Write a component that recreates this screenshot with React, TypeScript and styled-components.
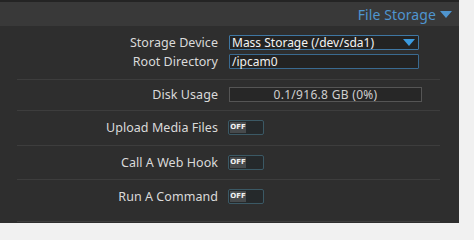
import React from "react";
import styled, { createGlobalStyle } from "styled-components";

const Global = createGlobalStyle`
  html, body { margin: 0; padding: 0; background: #f1f1f1; }
  body { font-family: "Noto Sans", "Open Sans", sans-serif; }
  * { box-sizing: border-box; }
`;

const Page = styled.div`
  display: flex;
  height: 223px;
  overflow: hidden;
`;

const Panel = styled.div`
  width: 459px;
  flex: none;
  background: #2e2e2e;
  border-top: 2px solid #242424;
  display: flex;
  flex-direction: column;
`;

const Aside = styled.div`
  flex: 1;
  background: #f1f1f1;
`;

const Header = styled.div`
  height: 24px;
  flex: none;
  background: #393939;
  display: flex;
  align-items: center;
  justify-content: flex-end;
  padding-right: 7px;
  gap: 4px;
  color: #4f95cf;
  font-size: 14px;
  letter-spacing: 0.1px;
`;

const Body = styled.div`
  display: flex;
  flex-direction: column;
  margin: 0 19px 0 17px;
`;

const Group = styled.div<{ $pt: number; $pb: number; $gap?: number }>`
  display: flex;
  flex-direction: column;
  gap: ${(p) => p.$gap ?? 0}px;
  padding: ${(p) => p.$pt}px 0 ${(p) => p.$pb}px;
  border-bottom: 1px solid #3d3d3d;
`;

const Row = styled.div`
  display: grid;
  grid-template-columns: 201px auto;
  column-gap: 11px;
  align-items: center;
  height: 15px;
`;

const Label = styled.div`
  text-align: right;
  color: #dadada;
  font-size: 12.5px;
  letter-spacing: 0.05px;
  line-height: 15px;
  white-space: nowrap;
`;

const Select = styled.div`
  width: 190px;
  height: 15px;
  border: 1px solid #3f77a3;
  border-radius: 1px;
  background: #232323;
  display: flex;
  align-items: center;
  justify-content: space-between;
  padding: 0 3px 0 2px;
  color: #f4f4f4;
  font-size: 12px;
  line-height: 13px;
`;

const Input = styled.div`
  width: 190px;
  height: 15px;
  border: 1px solid #3a6a90;
  border-radius: 1px;
  background: #232323;
  padding: 0 2px;
  color: #f0f0f0;
  font-size: 12px;
  line-height: 13px;
`;

const Meter = styled.div`
  width: 193px;
  height: 15px;
  border: 1px solid #555;
  background: #272727;
  color: #cfcfcf;
  font-size: 12px;
  line-height: 13px;
  text-align: center;
  letter-spacing: 0.3px;
`;

const Toggle = styled.div`
  width: 36px;
  height: 15px;
  margin-left: -1px;
  border: 1px solid #3b5965;
  border-radius: 2px;
  background: #25292b;
  display: flex;
  align-items: stretch;
`;

const Knob = styled.div`
  width: 16px;
  margin: 1px;
  background: #474a4c;
  color: #f2f2f2;
  font-size: 7px;
  font-weight: 700;
  line-height: 11px;
  text-align: center;
  font-family: "DejaVu Sans", sans-serif;
`;

const Arrow = ({ size, color }: { size: [number, number]; color: string }) => (
  <svg width={size[0]} height={size[1]} viewBox="0 0 12 7" style={{ display: "block" }}>
    <path d="M0 0 H12 L6 7 Z" fill={color} />
  </svg>
);

const OffToggle = () => (
  <Toggle>
    <Knob>OFF</Knob>
  </Toggle>
);

export default function App() {
  return (
    <>
      <Global />
      <Page>
        <Panel>
          <Header>
            <span>File Storage</span>
            <Arrow size={[12, 7]} color="#4f95cf" />
          </Header>
          <Body>
            <Group $pt={9} $pb={10} $gap={4}>
              <Row>
                <Label>Storage Device</Label>
                <Select>
                  <span>Mass Storage (/dev/sda1)</span>
                  <Arrow size={[12, 7]} color="#3b9be0" />
                </Select>
              </Row>
              <Row>
                <Label>Root Directory</Label>
                <Input>/ipcam0</Input>
              </Row>
            </Group>
            <Group $pt={7} $pb={8}>
              <Row>
                <Label>Disk Usage</Label>
                <Meter>0.1/916.8 GB (0%)</Meter>
              </Row>
            </Group>
            <Group $pt={9} $pb={10}>
              <Row>
                <Label>Upload Media Files</Label>
                <OffToggle />
              </Row>
            </Group>
            <Group $pt={9} $pb={9}>
              <Row>
                <Label>Call A Web Hook</Label>
                <OffToggle />
              </Row>
            </Group>
            <Group $pt={9} $pb={17}>
              <Row>
                <Label>Run A Command</Label>
                <OffToggle />
              </Row>
            </Group>
          </Body>
        </Panel>
        <Aside />
      </Page>
    </>
  );
}
